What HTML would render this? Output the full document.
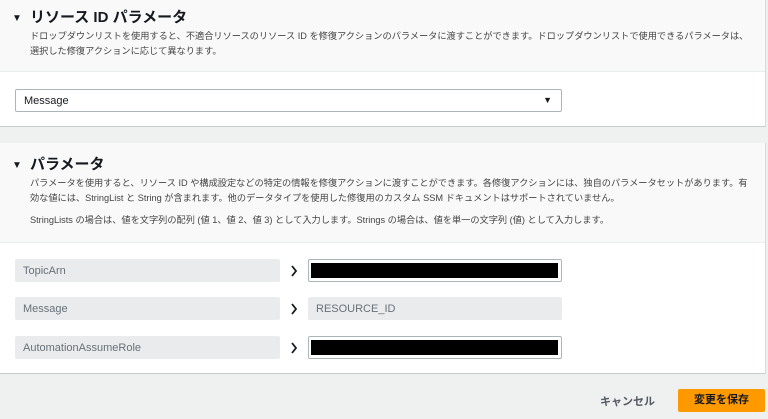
<!DOCTYPE html>
<html><head><meta charset="utf-8"><style>
*{margin:0;padding:0;box-sizing:border-box}
body{width:768px;height:419px;overflow:hidden;background:#eff0f0;font-family:"Liberation Sans","Noto Sans CJK JP",sans-serif;color:#16191f;position:relative}
.abs{position:absolute}
.panel{position:absolute;left:0;width:766px;background:#fff;border-right:1px solid #d5dbdb;border-bottom:1px solid #c8cccc}
.hd{position:absolute;left:0;top:0;width:100%;background:#f9f9f9;border-bottom:1px solid #eaeded}
.tri{position:absolute;left:12px;font-size:10px;line-height:10px}
.title{position:absolute;left:30px;font-size:15px;line-height:18px;font-weight:bold}
.desc{position:absolute;left:30px;font-size:9.2px;color:#444;line-height:15px;white-space:nowrap}
.lbl{position:absolute;left:15px;width:265px;height:23px;background:#e9ebed;border-radius:2px;font-size:11px;color:#687078;padding:6px 8px}
.chev{position:absolute;left:290px;width:8px;height:12px}
.inp{position:absolute;left:308px;width:254px;height:23px;border:1px solid #aab7b8;border-radius:2px;background:#fff}
.inp i{position:absolute;left:2px;top:3px;right:3px;bottom:3px;background:#000}
</style></head><body>
<div class="panel" style="top:-2px;height:129px">
 <div class="hd" style="height:74px"></div>
 <div class="tri" style="top:16px">▼</div>
 <div class="title" style="top:11px">リソース ID パラメータ</div>
 <div class="desc" style="top:31px">ドロップダウンリストを使用すると、不適合リソースのリソース ID を修復アクションのパラメータに渡すことができます。ドロップダウンリストで使用できるパラメータは、<br>選択した修復アクションに応じて異なります。</div>
 <div class="abs" style="left:15px;top:91px;width:547px;height:23px;border:1px solid #aab7b8;border-radius:2px;font-size:11px;padding:5px 8px">Message<span class="abs" style="right:9px;top:5px;font-size:9px">▼</span></div>
</div>
<div class="panel" style="top:143px;height:231px">
 <div class="hd" style="height:100px"></div>
 <div class="tri" style="top:18px">▼</div>
 <div class="title" style="top:13px">パラメータ</div>
 <div class="desc" style="top:33px">パラメータを使用すると、リソース ID や構成設定などの特定の情報を修復アクションに渡すことができます。各修復アクションには、独自のパラメータセットがあります。有<br>効な値には、StringList と String が含まれます。他のデータタイプを使用した修復用のカスタム SSM ドキュメントはサポートされていません。</div>
 <div class="desc" style="top:70px">StringLists の場合は、値を文字列の配列 (値 1、値 2、値 3) として入力します。Strings の場合は、値を単一の文字列 (値) として入力します。</div>
 <div class="lbl" style="top:116px">TopicArn</div><svg class="chev" style="top:122px" viewBox="0 0 8 12"><path d="M2 1l4 5-4 5" fill="none" stroke="#16191f" stroke-width="1.8"/></svg>
 <div class="inp" style="top:116px"><i></i></div>
 <div class="lbl" style="top:154px">Message</div><svg class="chev" style="top:160px" viewBox="0 0 8 12"><path d="M2 1l4 5-4 5" fill="none" stroke="#16191f" stroke-width="1.8"/></svg>
 <div class="inp" style="top:154px;background:#e9ebed;border:none;font-size:11px;color:#687078;padding:6px 8px">RESOURCE_ID</div>
 <div class="lbl" style="top:193px">AutomationAssumeRole</div><svg class="chev" style="top:199px" viewBox="0 0 8 12"><path d="M2 1l4 5-4 5" fill="none" stroke="#16191f" stroke-width="1.8"/></svg>
 <div class="inp" style="top:193px"><i></i></div>
</div>
<div class="abs" style="left:600px;top:393px;font-size:11px;font-weight:bold;color:#545b64">キャンセル</div>
<div class="abs" style="left:678px;top:389px;width:87px;height:23px;background:#f90;border-radius:2px;font-size:11px;font-weight:bold;text-align:center;line-height:23px">変更を保存</div>
</body></html>
